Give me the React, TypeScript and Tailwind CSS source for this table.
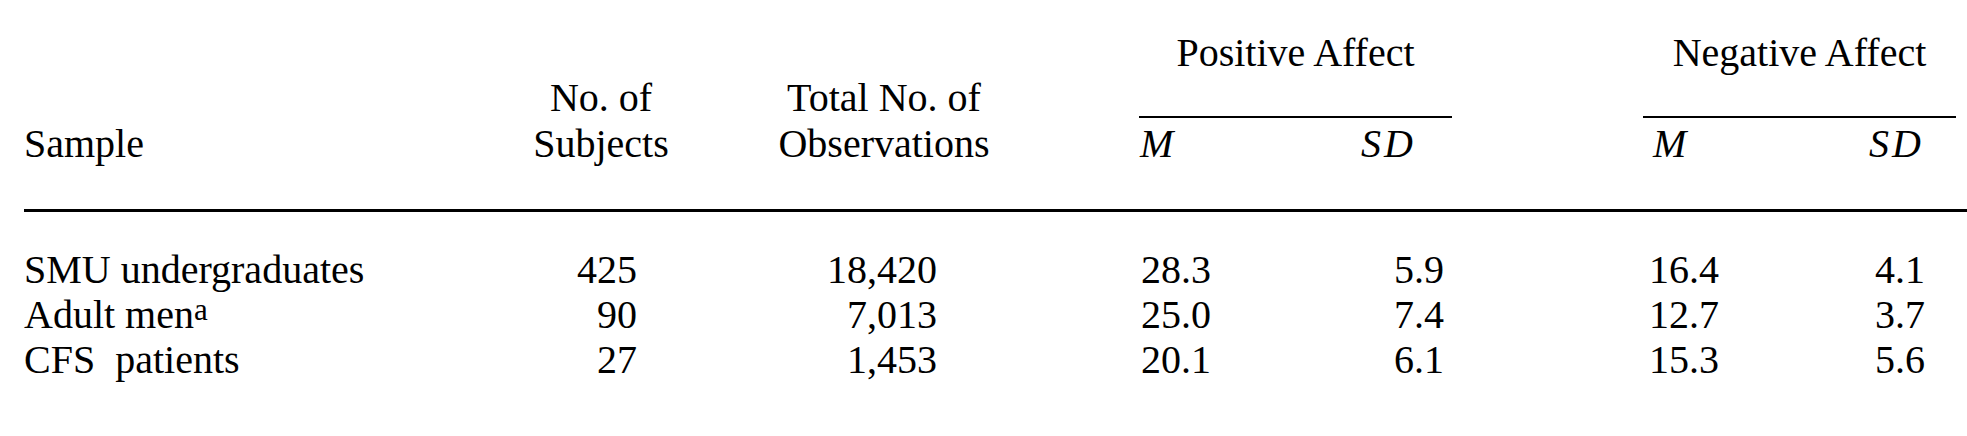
const rows = [
  { name: "SMU undergraduates", sup: "", n: "425", obs: "18,420", pm: "28.3", psd: "5.9", nm: "16.4", nsd: "4.1" },
  { name: "Adult men", sup: "a", n: "90", obs: "7,013", pm: "25.0", psd: "7.4", nm: "12.7", nsd: "3.7" },
  { name: "CFS\u00a0 patients", sup: "", n: "27", obs: "1,453", pm: "20.1", psd: "6.1", nm: "15.3", nsd: "5.6" },
];

function AffectHead({ title, mPad, sdPad }: { title: string; mPad: string; sdPad: string }) {
  return (
    <div className="flex flex-col w-[313px]">
      <div className="text-center">{title}</div>
      <div className="mt-[40px] h-[2px] bg-black"></div>
      <div className="mt-[3px] flex italic">
        <div className={"w-[156px] " + mPad}>M</div>
        <div className={"flex-1 text-right tracking-[3px] " + sdPad}>SD</div>
      </div>
    </div>
  );
}

export default function App() {
  return (
    <div className="min-h-screen bg-white pl-[24px] pt-[30px] font-['Liberation_Serif',serif] text-[40px] leading-[46px] text-black">
      <div className="flex items-end">
        <div className="w-[507px]">Sample</div>
        <div className="w-[140px] text-center">
          <div>No. of</div>
          <div>Subjects</div>
        </div>
        <div className="w-[426px] text-center">
          <div>Total No. of</div>
          <div>Observations</div>
        </div>
        <div className="ml-[42px]">
          <AffectHead title="Positive Affect" mPad="pl-[1px]" sdPad="pr-[36px]" />
        </div>
        <div className="ml-[191px]">
          <AffectHead title="Negative Affect" mPad="pl-[10px]" sdPad="pr-[32px]" />
        </div>
      </div>

      <div className="mt-[42px] h-[3px] bg-black"></div>

      <div className="mt-[35px] leading-[45px]">
        {rows.map((r) => (
          <div key={r.name} className="flex">
            <div className="w-[507px] whitespace-pre">
              {r.name}
              {r.sup && <span className="text-[31px] leading-[0] align-[8px]">{r.sup}</span>}
            </div>
            <div className="w-[140px] pr-[34px] text-right">{r.n}</div>
            <div className="w-[426px] pr-[160px] text-right">{r.obs}</div>
            <div className="ml-[42px] w-[156px] pl-[2px]">{r.pm}</div>
            <div className="w-[157px] pr-[8px] text-right">{r.psd}</div>
            <div className="ml-[191px] w-[156px] pl-[6px]">{r.nm}</div>
            <div className="w-[156px] pr-[30px] text-right">{r.nsd}</div>
          </div>
        ))}
      </div>
    </div>
  );
}
